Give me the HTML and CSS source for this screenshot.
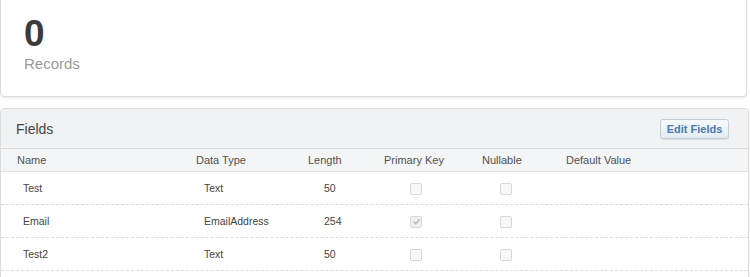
FILE: index.html
```html
<!DOCTYPE html>
<html>
<head>
<meta charset="utf-8">
<link rel="stylesheet" href="styles.css">
</head>
<body>
<div class="page">
  <div class="card stats">
    <div class="big">0</div>
    <div class="label">Records</div>
  </div>
  <div class="card panel">
    <div class="panel-head">
      <div class="title">Fields</div>
      <button class="btn">Edit Fields</button>
    </div>
    <div class="row head">
      <div class="c name">Name</div>
      <div class="c type">Data Type</div>
      <div class="c len">Length</div>
      <div class="c pk">Primary Key</div>
      <div class="c nul">Nullable</div>
      <div class="c def">Default Value</div>
    </div>
    <div class="row body">
      <div class="c name">Test</div>
      <div class="c type">Text</div>
      <div class="c len">50</div>
      <div class="c pk"><span class="cb"></span></div>
      <div class="c nul"><span class="cb"></span></div>
      <div class="c def"></div>
    </div>
    <div class="row body">
      <div class="c name">Email</div>
      <div class="c type">EmailAddress</div>
      <div class="c len">254</div>
      <div class="c pk"><span class="cb checked"><svg viewBox="0 0 10 10" width="9" height="9"><path d="M2 5.2 L4.2 7.4 L8.2 2.6" fill="none" stroke="#b5b5b5" stroke-width="1.6"/></svg></span></div>
      <div class="c nul"><span class="cb"></span></div>
      <div class="c def"></div>
    </div>
    <div class="row body">
      <div class="c name">Test2</div>
      <div class="c type">Text</div>
      <div class="c len">50</div>
      <div class="c pk"><span class="cb"></span></div>
      <div class="c nul"><span class="cb"></span></div>
      <div class="c def"></div>
    </div>
  </div>
</div>
</body>
</html>
```
FILE: styles.css
```css
html, body {
  margin: 0;
  padding: 0;
  background: #fff;
  font-family: "Liberation Sans", Arial, sans-serif;
}
.page {
  width: 750px;
  height: 277px;
  overflow: hidden;
  display: flex;
  flex-direction: column;
  gap: 11px;
}
.card {
  flex-shrink: 0;
  border: 1px solid #dcdcdc;
  border-radius: 4px;
  box-shadow: 0 1px 2px rgba(0,0,0,0.08);
  background: #fff;
  width: 747px;
}
.stats {
  margin-top: -5px;
  height: 102px;
  box-sizing: border-box;
  padding: 18px 0 0 23px;
}
.big {
  font-size: 37px;
  font-weight: bold;
  color: #3b3b3b;
  line-height: 40px;
}
.label {
  font-size: 15px;
  color: #9a9a9a;
  margin-top: 1px;
}
.panel {
  height: 200px;
}
.panel-head {
  background: #f1f2f4;
  height: 39px;
  display: flex;
  align-items: center;
  justify-content: space-between;
  padding: 0 19px 0 15px;
  border-radius: 4px 4px 0 0;
}
.title {
  font-size: 14px;
  color: #444;
  margin-top: 1px;
}
.btn {
  font-family: "Liberation Sans", Arial, sans-serif;
  font-size: 11px;
  font-weight: bold;
  color: #4a79b0;
  height: 20px;
  width: 69px;
  padding: 0;
  border: 1px solid #c3ced9;
  border-radius: 3px;
  background: linear-gradient(#f7fafc, #e3ebf2);
  box-shadow: 0 1px 1px rgba(0,0,0,0.08);
}
.row {
  display: flex;
  align-items: center;
  font-size: 11px;
}
.row.head {
  height: 22px;
  background: #f4f5f6;
  border-top: 1px solid #dadada;
  border-bottom: 1px solid #e3e3e3;
  color: #505050;
}
.row.body {
  height: 32px;
  border-bottom: 1px dashed #dcdcdc;
  color: #444;
  font-size: 10.5px;
}
.c { box-sizing: border-box; }
.name { width: 180px; padding-left: 16px; }
.type { width: 112px; }
.len { width: 84px; }
.pk { width: 98px; }
.nul { width: 85px; }
.def { flex: 1; }
.body .name { padding-left: 22px; }
.body .type { padding-left: 23px; }
.body .len { padding-left: 31px; }
.body .pk { padding-left: 33px; }
.body .nul { padding-left: 25px; }
.head .type { padding-left: 15px; }
.head .len { padding-left: 15px; }
.head .pk { padding-left: 7px; }
.head .nul { padding-left: 7px; }
.head .def { padding-left: 6px; }
.cb {
  display: inline-flex;
  align-items: center;
  justify-content: center;
  width: 10px;
  height: 10px;
  border: 1px solid #d8d8d8;
  border-radius: 2px;
  background: #f8f8f8;
  vertical-align: middle;
}
.cb.checked { background: #eeeeee; }
```
